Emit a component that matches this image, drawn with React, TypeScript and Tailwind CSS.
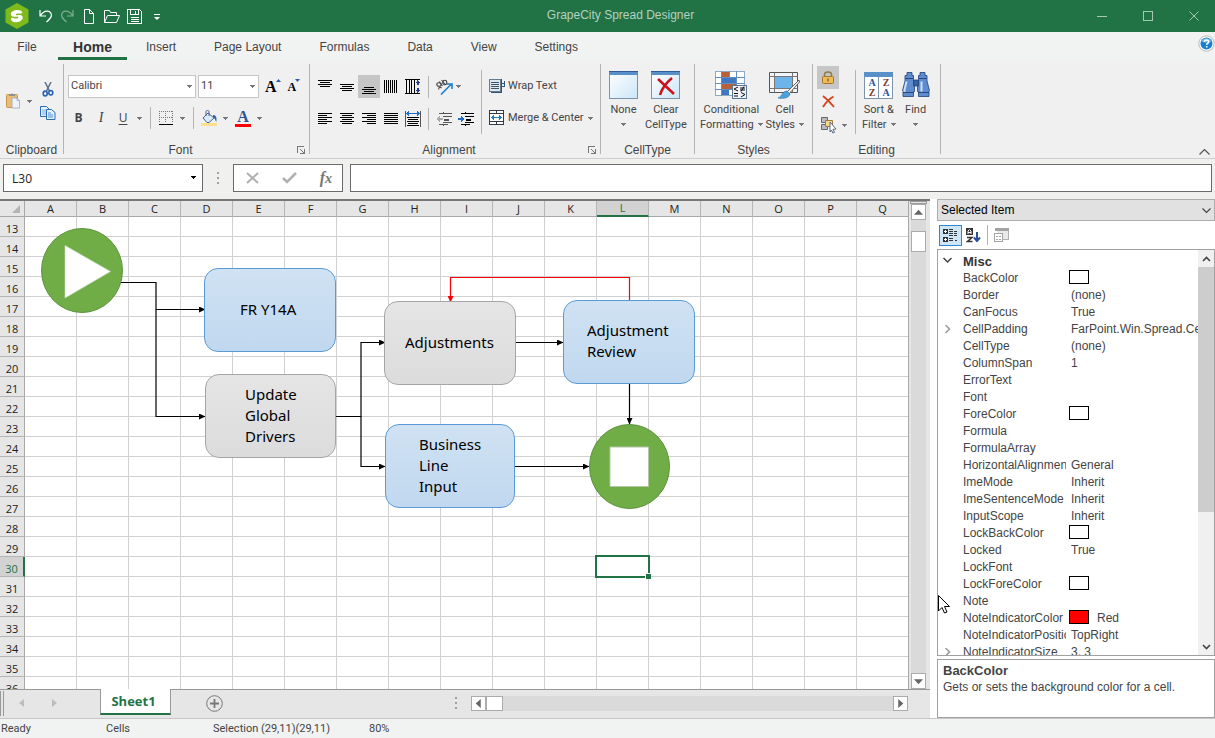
import type { ReactNode } from "react";
import clsx from "clsx";

const columns = "ABCDEFGHIJKLMNOPQ".split("");
const rows = Array.from({ length: 24 }, (_, i) => i + 13);
const activeColumn = "L";
const activeRow = 30;

const tabs = ["Insert", "Page Layout", "Formulas", "Data", "View", "Settings"];

type Property = { name: string; value?: string; swatch?: "white" | "red"; expandable?: boolean };

const properties: Property[] = [
  { name: "BackColor", swatch: "white" },
  { name: "Border", value: "(none)" },
  { name: "CanFocus", value: "True" },
  { name: "CellPadding", value: "FarPoint.Win.Spread.CellPadding", expandable: true },
  { name: "CellType", value: "(none)" },
  { name: "ColumnSpan", value: "1" },
  { name: "ErrorText" },
  { name: "Font" },
  { name: "ForeColor", swatch: "white" },
  { name: "Formula" },
  { name: "FormulaArray" },
  { name: "HorizontalAlignment", value: "General" },
  { name: "ImeMode", value: "Inherit" },
  { name: "ImeSentenceMode", value: "Inherit" },
  { name: "InputScope", value: "Inherit" },
  { name: "LockBackColor", swatch: "white" },
  { name: "Locked", value: "True" },
  { name: "LockFont" },
  { name: "LockForeColor", swatch: "white" },
  { name: "Note" },
  { name: "NoteIndicatorColor", value: "Red", swatch: "red" },
  { name: "NoteIndicatorPosition", value: "TopRight" },
  { name: "NoteIndicatorSize", value: "3, 3", expandable: true },
];

function Caret({ className = "text-[#777]" }: { className?: string }) {
  return (
    <svg width="5" height="3" viewBox="0 0 5 3" className={clsx("shrink-0", className)} shapeRendering="crispEdges">
      <path d="M0 0h5v1H4v1H3v1H2V2H1V1H0z" fill="currentColor" />
    </svg>
  );
}

function Divider({ className }: { className: string }) {
  return <div className={clsx("w-px shrink-0 bg-[#b4b4b4]", className)} />;
}

// Rows of horizontal rules, used by all the alignment buttons
function Lines({ rules }: { rules: [number, number, number][] }) {
  return (
    <svg width="16" height="16" viewBox="0 0 16 16" shapeRendering="crispEdges">
      {rules.map(([x, y, w]) => (
        <rect key={`${x}-${y}`} x={x} y={y} width={w} height="1" fill="#000" />
      ))}
    </svg>
  );
}

function IconButton({ label, active, className, children }: { label: string; active?: boolean; className?: string; children: ReactNode }) {
  return (
    <button
      type="button"
      aria-label={label}
      className={clsx("flex shrink-0 items-center justify-center", active && "bg-[#c6c6c6]", className ?? "h-[23px] w-[22px]")}
    >
      {children}
    </button>
  );
}

function Launcher() {
  return (
    <button type="button" aria-label="More options" className="absolute right-1 bottom-1">
      <svg width="8" height="8" viewBox="0 0 8 8" shapeRendering="crispEdges" fill="#777">
        <path d="M0 0h7v1H1v6H0zM3 3h1v1h1v1h1v1h1V3h1v5H3V7h3V6H5V5H4V4H3z" />
      </svg>
    </button>
  );
}

function Group({ title, width, launcher, children }: { title: string; width: string; launcher?: boolean; children: ReactNode }) {
  return (
    <>
      <section aria-label={title} className={clsx("relative flex shrink-0 flex-col", width)}>
        <div className="h-[78px]">{children}</div>
        <h2 className={clsx("text-center font-['Liberation_Sans',Arial,sans-serif] text-xs leading-4 text-[#444]", launcher && "pr-3")}>{title}</h2>
        {launcher && <Launcher />}
      </section>
      <Divider className="h-[90px]" />
    </>
  );
}

function BigButton({ icon, first, second, caret }: { icon: ReactNode; first: string; second?: string; caret?: boolean }) {
  return (
    <button type="button" className="flex flex-col items-center leading-[15px]">
      <span className="flex h-[30px] items-center">{icon}</span>
      <span className="mt-[2px]">{first}</span>
      <span className="flex h-[15px] items-center gap-1">
        {second}
        {caret && <Caret />}
      </span>
    </button>
  );
}

function Logo() {
  return (
    <svg width="24" height="26" viewBox="0 0 24 26">
      <path d="M12 0 23.5 6.5v13L12 26 .5 19.500V6.500z" fill="#7fba1b" />
      <path
        d="M17.500 9.500C16.500 7 13 6.500 10 7.200 6.500 8 5 10.500 6.300 12.500c1 1.500 3 1.500 4.800 1.200 1.500-.2 2.300.1 2.300.7 0 .8-1.500 1.200-3.200 1-1.700-.2-2.600-.8-3.800-.7-1.300 2.500 1.600 4.800 5 4.500 3.800-.3 6.700-2.600 6.300-5-.4-2-2.700-2.300-5-2-1.300.2-2-.1-1.900-.7.2-.8 1.600-1.100 3-.9 1.400.200 2.500-.1 3.700-1.100z"
        fill="#fff"
      />
    </svg>
  );
}

function TitleBar() {
  return (
    <header className="flex h-8 shrink-0 items-center bg-[#217346] pl-[5px] text-white">
      <Logo />
      <div className="flex items-center gap-[7px] pl-[9px]">
        <button type="button" aria-label="Undo">
          <svg width="15" height="14" viewBox="0 0 15 14" fill="none" stroke="#fff" strokeWidth="1.200">
            <path d="M2 1v6h6M2.500 6.500C4.500 3.500 7 2 9.500 2.200c3 .3 4.300 2.500 3.800 4.800-.3 1.500-2 3.500-4.800 6" />
          </svg>
        </button>
        <button type="button" aria-label="Redo">
          <svg width="15" height="14" viewBox="0 0 15 14" fill="none" stroke="#7fae93" strokeWidth="1.200">
            <path d="M13 1v6H7M12.500 6.500C10.500 3.500 8 2 5.500 2.200 2.500 2.500 1.200 4.700 1.700 7c.3 1.500 2 3.500 4.800 6" />
          </svg>
        </button>
        <button type="button" aria-label="New" className="px-[2px]">
          <svg width="11" height="15" viewBox="0 0 11 15" fill="none" stroke="#fff">
            <path d="M.500.5h5l4 4v10h-9zM5.500.5v4h4" />
          </svg>
        </button>
        <button type="button" aria-label="Open">
          <svg width="16" height="13" viewBox="0 0 16 13" fill="none" stroke="#fff">
            <path d="M.5 12.500V.5h5l1 2h6v3M.5 12.500l3-7h12l-3 7z" />
          </svg>
        </button>
        <button type="button" aria-label="Save">
          <svg width="15" height="15" viewBox="0 0 15 15" fill="none" stroke="#fff" shapeRendering="crispEdges">
            <path d="M.5.5h12l2 2v12H.5zM3.500.5v5h8v-5M8.500 1.500v3M3.500 8.500h8M3.500 10.500h8M3.500 12.500h8" />
          </svg>
        </button>
        <button type="button" aria-label="Customize toolbar" className="ml-[5px]">
          <svg width="6" height="7" viewBox="0 0 6 7" fill="#fff">
            <path d="M0 1h6v1H0zM0 4h6L3 7z" />
          </svg>
        </button>
      </div>
      <h1 className="flex-1 pr-4 pb-[2px] text-center text-xs text-[#b4d0c0]">GrapeCity Spread Designer</h1>
      <div className="flex items-center gap-9 pr-4">
        <button type="button" aria-label="Minimize" className="flex size-[10px] items-center">
          <span className="h-px w-full bg-[#a6c7b5]" />
        </button>
        <button type="button" aria-label="Maximize" className="size-[10px] border border-[#a6c7b5]" />
        <button type="button" aria-label="Close">
          <svg width="10" height="10" viewBox="0 0 10 10" stroke="#a6c7b5">
            <path d="M.5.5l9 9M9.500.5l-9 9" />
          </svg>
        </button>
      </div>
    </header>
  );
}

function TabStrip() {
  return (
    <nav aria-label="Ribbon tabs" className="flex h-7 shrink-0 bg-[#f1f3f2] text-xs text-[#444]">
      <button type="button" className="w-[58px] pt-px pr-1">File</button>
      <button type="button" className="w-[69px] border-b-3 border-[#217346] pt-1 text-sm leading-5 font-bold text-[#333]">Home</button>
      {tabs.map((tab) => (
        <button key={tab} type="button" className="px-[19px] pt-px">
          {tab}
        </button>
      ))}
      <button type="button" aria-label="Help" className="ml-auto self-start pt-[3px]">
        <svg width="17" height="17" viewBox="0 0 17 17">
          <circle cx="8.500" cy="8.500" r="7.700" fill="#fff" stroke="#b5b5b5" />
          <circle cx="8.500" cy="8.500" r="6" fill="#1b7fd0" />
          <path d="M3.500 6.500a5.500 5.500 0 0 1 10 0c-3 1.500-7 1.500-10 0z" fill="#6db5ec" />
          <path d="M6.200 6.800C6.500 4.500 11 4.500 10.700 7c-.2 1.300-2 1.300-2 2.800M8.700 11v1.500" fill="none" stroke="#fff" strokeWidth="1.600" />
        </svg>
      </button>
    </nav>
  );
}

function ClipboardGroup() {
  return (
    <Group title="Clipboard" width="w-[63px]">
      <div className="flex h-[74px] items-center">
        <button type="button" aria-label="Paste" className="ml-[6px] flex items-center gap-[7px]">
          <svg width="14" height="16" viewBox="0 0 14 16">
            <rect x=".5" y="1.500" width="11" height="13" rx="1" fill="#e9bd78" stroke="#c79549" />
            <path d="M3 3V1.500h1.500L6 .3l1.500 1.200H9V3z" fill="#8a8f98" />
            <path d="M6 5h5l2.500 2.500V15H6z" fill="#eef3fb" stroke="#9aa7bd" strokeWidth=".8" />
            <path d="M11 5v2.500h2.500" fill="none" stroke="#9aa7bd" strokeWidth=".8" />
          </svg>
          <Caret />
        </button>
        <div className="ml-2 flex flex-col gap-[9px]">
          <button type="button" aria-label="Cut" className="flex justify-center">
            <svg width="12" height="15" viewBox="0 0 12 15" fill="none">
              <path d="M3 0l4.500 9M9 0L4.500 9" stroke="#5b6f8c" strokeWidth="1.500" />
              <ellipse cx="3.200" cy="11.500" rx="2" ry="2.400" stroke="#2a62b4" strokeWidth="1.600" />
              <ellipse cx="8.800" cy="10.800" rx="2" ry="2.200" stroke="#2a62b4" strokeWidth="1.600" />
            </svg>
          </button>
          <button type="button" aria-label="Copy">
            <svg width="16" height="14" viewBox="0 0 16 14" stroke="#2b6cb5">
              <path d="M.5.500h6l3 3v7h-9z" fill="#e4f0fc" />
              <path d="M2 4h4M2 6h4M2 8h4" stroke="#7fb0e0" />
              <path d="M6.500 3.500h5l3.500 3v7H6.500z" fill="#e4f0fc" />
              <path d="M8 7h3M8 9h5M8 11h5" stroke="#4a8fd6" />
            </svg>
          </button>
        </div>
      </div>
    </Group>
  );
}

function FontGroup() {
  return (
    <Group title="Font" width="w-[245px]" launcher>
      <div className="flex items-center pt-[11px] pl-1">
        <div className="relative mr-[2px] w-[128px]">
          <select aria-label="Font name" className="h-[23px] w-full appearance-none border border-[#c6c6c6] bg-white pl-[2px] outline-none">
            <option>Calibri</option>
          </select>
          <Caret className="pointer-events-none absolute top-[10px] right-1 text-[#777]" />
        </div>
        <div className="relative w-[61px]">
          <select aria-label="Font size" className="h-[23px] w-full appearance-none border border-[#c6c6c6] bg-white pl-[2px] outline-none">
            <option>11</option>
          </select>
          <Caret className="pointer-events-none absolute top-[10px] right-1 text-[#777]" />
        </div>
        <button type="button" aria-label="Grow font" className="ml-[6px] flex font-['Liberation_Serif',serif] text-base leading-5 font-bold text-black">
          A
          <svg width="5" height="3" viewBox="0 0 5 3" className="mt-[2px] -ml-px">
            <path d="M0 3h5L2.500 0z" fill="#2a5caa" />
          </svg>
        </button>
        <button type="button" aria-label="Shrink font" className="ml-[7px] flex font-['Liberation_Serif',serif] text-xs leading-5 font-bold text-black">
          A
          <svg width="5" height="3" viewBox="0 0 5 3" className="mt-[2px] -ml-px">
            <path d="M0 0h5L2.500 3z" fill="#2a5caa" />
          </svg>
        </button>
      </div>
      <div className="flex items-center pt-[9px] pl-1 text-[#444]">
        <button type="button" aria-label="Bold" className="w-[21px] font-['Open_Sans',sans-serif] text-xs font-bold">B</button>
        <button type="button" aria-label="Italic" className="w-6 font-['Liberation_Serif',serif] text-sm italic">I</button>
        <button type="button" aria-label="Underline" className="w-5 font-['Open_Sans',sans-serif] text-xs underline underline-offset-2">U</button>
        <Caret className="ml-1 text-[#777]" />
        <Divider className="ml-[8px] h-[22px]" />
        <button type="button" aria-label="Borders" className="ml-[8px] flex items-center gap-[7px]">
          <svg width="14" height="14" viewBox="0 0 14 14" shapeRendering="crispEdges" stroke="#777">
            <path d="M0 .5h14M0 6.500h14M.5 0v12M6.500 0v12M13.500 0v12" strokeDasharray="1 1" />
            <path d="M0 13.500h14" stroke="#000" />
          </svg>
          <Caret />
        </button>
        <Divider className="ml-[8px] h-[22px]" />
        <button type="button" aria-label="Fill color" className="ml-[7px] flex items-center gap-[6px]">
          <svg width="16" height="16" viewBox="0 0 16 16">
            <path d="M2 8l5-5 6 5-5 4.500H6z" fill="#dbe9f7" stroke="#4a668c" />
            <path d="M5 6V1.500c0-1.500 3-1.500 3 0V6" fill="none" stroke="#4a668c" />
            <path d="M12 5c3 0 4 2.500 3.300 7-1-1.500-1.500-4-3.300-5z" fill="#2a62b4" />
            <path d="M0 13h16v3H0z" fill="#fbe18d" />
          </svg>
          <Caret />
        </button>
        <button type="button" aria-label="Font color" className="ml-[7px] flex items-center gap-[6px]">
          <span className="flex w-4 flex-col items-center border-b-3 border-[#f00] font-['Liberation_Serif',serif] text-base leading-[14px] font-bold text-[#2f5496]">A</span>
          <Caret />
        </button>
      </div>
    </Group>
  );
}

function AlignmentGroup() {
  return (
    <Group title="Alignment" width="w-[290px]" launcher>
      <div className="flex">
        <div className="pt-[11px] pl-1">
          <div className="flex items-center">
            <IconButton label="Top align">
              <Lines rules={[[1, 1, 14], [3, 3, 10], [1, 5, 14], [3, 7, 10]]} />
            </IconButton>
            <IconButton label="Middle align">
              <Lines rules={[[1, 5, 14], [3, 7, 10], [1, 9, 14], [3, 11, 10]]} />
            </IconButton>
            <IconButton label="Bottom align" active>
              <Lines rules={[[3, 8, 10], [1, 10, 14], [3, 12, 10], [1, 14, 14]]} />
            </IconButton>
            <IconButton label="Vertical justify">
              <svg width="16" height="16" viewBox="0 0 16 16" shapeRendering="crispEdges">
                <path d="M1.500 1v13M3.500 1v13M5.500 1v13M7.500 1v13M9.500 1v13M11.500 1v13M13.500 1v13" stroke="#000" />
              </svg>
            </IconButton>
            <IconButton label="Vertical distributed">
              <svg width="16" height="16" viewBox="0 0 16 16" shapeRendering="crispEdges">
                <path d="M0 .5h15M0 14.500h15M1.500 1v13M4.500 1v13M6.500 1v13M9.500 1v13" stroke="#000" />
                <path d="M12 1h1v1h1v1h1v1h-1v2h-2V4h-1V3h1zM12 14h1v-1h1v-1h1v-1h-1V9h-2v2h-1v1h1z" fill="#20408f" />
              </svg>
            </IconButton>
            <Divider className="ml-1 h-[22px]" />
            <button type="button" aria-label="Orientation" className="ml-[7px] flex items-center gap-[3px]">
              <svg width="17" height="16" viewBox="0 0 17 16" fill="none">
                <ellipse cx="3" cy="5.500" rx="2.200" ry="1.800" stroke="#444" strokeWidth="1.100" />
                <path d="M3 2.500l3.500 4.500M5.500 1l4 5" stroke="#444" strokeWidth="1.100" />
                <ellipse cx="8.800" cy="3.500" rx="2" ry="2.200" stroke="#444" strokeWidth="1.100" />
                <path d="M3 10.500C2 8.500 4 7.500 5.500 9" stroke="#444" strokeWidth="1.100" />
                <path d="M5 15.500L15 5.500M10.500 5H16v5" stroke="#1e7fc8" strokeWidth="1.600" />
              </svg>
              <Caret />
            </button>
          </div>
          <div className="flex items-center pt-[9px]">
            <IconButton label="Align left">
              <Lines rules={[[1, 2, 14], [1, 4, 9], [1, 6, 14], [1, 8, 9], [1, 10, 14], [1, 12, 9]]} />
            </IconButton>
            <IconButton label="Center">
              <Lines rules={[[1, 2, 14], [3, 4, 10], [1, 6, 14], [3, 8, 10], [1, 10, 14], [3, 12, 10]]} />
            </IconButton>
            <IconButton label="Align right">
              <Lines rules={[[1, 2, 14], [6, 4, 9], [1, 6, 14], [6, 8, 9], [1, 10, 14], [6, 12, 9]]} />
            </IconButton>
            <IconButton label="Justify">
              <Lines rules={[[1, 2, 14], [1, 4, 14], [1, 6, 14], [1, 8, 14], [1, 10, 14], [1, 12, 14]]} />
            </IconButton>
            <IconButton label="Distributed">
              <svg width="16" height="16" viewBox="0 0 16 16" shapeRendering="crispEdges">
                <path d="M.5 0v16M15.500 0v16" stroke="#555" />
                <path d="M1 2h1V1h1V0h1v2h8V0h1v1h1v1h1v1h-1v1h-1v1h-1V3H4v2H3V4H2V3H1z" fill="#1e6fc8" />
                <path d="M2 6.500h12M3 8.500h10M2 10.500h12M3 12.500h10M2 14.500h12" stroke="#000" />
              </svg>
            </IconButton>
            <Divider className="ml-1 h-[22px]" />
            <IconButton label="Decrease indent" className="ml-[7px]">
              <svg width="17" height="16" viewBox="0 0 17 16" shapeRendering="crispEdges" fill="#555">
                <path d="M3 2h4v1H3zM8 2h8v1H8zM8 5h8v1H8zM8 8h5v2H8zM8 11h8v1H8zM3 13h4v1H3zM8 13h4v1H8z" />
                <path d="M7 1h1v2H7zM7 5h1v1H7zM7 11h1v1H7zM7 13h1v2H7z" />
                <path d="M0 8l4-3v2h3v2H4v2z" fill="#aaa" />
              </svg>
            </IconButton>
            <IconButton label="Increase indent" className="ml-[5px]">
              <svg width="17" height="16" viewBox="0 0 17 16" shapeRendering="crispEdges" fill="#000">
                <path d="M3 2h4v1H3zM8 2h8v1H8zM8 5h8v1H8zM8 8h5v2H8zM8 11h8v1H8zM3 13h4v1H3zM8 13h4v1H8z" />
                <path d="M7 1h1v2H7zM7 5h1v1H7zM7 11h1v1H7zM7 13h1v2H7z" />
                <path d="M7 8L3 5v2H0v2h3v2z" fill="#1e6fc8" />
              </svg>
            </IconButton>
          </div>
        </div>
        <Divider className="mt-[6px] ml-auto h-[64px]" />
        <div className="flex w-[118px] flex-col gap-4 pt-[14px] pl-[7px]">
          <button type="button" className="flex h-4 items-center gap-[3px] whitespace-nowrap">
            <svg width="16" height="16" viewBox="0 0 16 16" shapeRendering="crispEdges">
              <path d="M.5 1.500h11v12H.5z" fill="#dfe7ee" stroke="#687b8c" />
              <path d="M2 4.500h8M2 6.500h8M2 8.500h8M2 10.500h8" stroke="#40566b" />
              <path d="M12 5h3V3M12.500 1v13M15.500 3v5h-3M12.500 14.500h-11" stroke="#2f5080" fill="none" />
            </svg>
            Wrap Text
          </button>
          <button type="button" className="flex h-4 items-center gap-[3px] whitespace-nowrap">
            <svg width="16" height="16" viewBox="0 0 16 16" shapeRendering="crispEdges">
              <path d="M.5.500h14v14H.5zM.5 3.500h14M.5 11.500h14M7.500.500v3M7.500 11.500v3" fill="#fff" stroke="#333a48" />
              <path d="M1 4h13v7H1z" fill="#fff" />
              <path d="M2 7h1V6h1V5h1v2h5V5h1v1h1v1h1v1h-1v1h-1v1h-1V8H5v2H4V9H3V8H2z" fill="#1e7fc8" />
            </svg>
            <span>Merge &amp; Center</span>
            <Caret className="ml-px text-[#777]" />
          </button>
        </div>
      </div>
    </Group>
  );
}

function CellWindow({ crossed }: { crossed?: boolean }) {
  return (
    <svg width="29" height="29" viewBox="0 0 29 29">
      <defs>
        <linearGradient id="windowBody" x1="0" y1="0" x2="1" y2="1">
          <stop offset="0" stopColor="#fff" />
          <stop offset="1" stopColor="#cbe6f8" />
        </linearGradient>
      </defs>
      <rect x=".5" y=".5" width="28" height="27" fill="url(#windowBody)" stroke="#7d94a8" />
      <path d="M0 0h29v4H0z" fill="#5a90c8" />
      <path d="M0 0h29v1H0z" fill="#2f5c98" />
      {crossed && <path d="M7 8l16 15M21 7C15 12 11 17 9 24" stroke="#c9141b" strokeWidth="2.600" fill="none" />}
    </svg>
  );
}

function StylesGroup() {
  return (
    <Group title="Styles" width="w-[117px]">
      <div className="flex justify-between pt-[6px] pr-2 pl-[5px]">
        <BigButton
          first="Conditional"
          second="Formatting"
          caret
          icon={
            <svg width="33" height="30" viewBox="0 0 33 30" shapeRendering="crispEdges">
              <path d="M.5 1.500h29v24H.5z" fill="#fff" stroke="#8faac5" />
              <path d="M7 2h7v5H7z" fill="#b5613a" />
              <path d="M7 8h14v5H7z" fill="#3f78c0" />
              <path d="M7 14h14v5H7z" fill="#b5613a" />
              <path d="M7 20h7v5H7z" fill="#3f78c0" />
              <path d="M0 7.500h30M0 13.500h30M0 19.500h30M6.500 1v25M14.500 1v6M21.500 1v25" stroke="#5f8fc4" />
              <path d="M17.500 15.500h14v13h-14z" fill="#eef3f8" stroke="#5a7690" />
              <path d="M23 17l-4 2 4 2M19 23.500h4M25 18h5M25 20h5M29 16.500l-3 5M26 22.500l4 2-4 2.500M19 26h4" fill="none" stroke="#111" shapeRendering="auto" />
            </svg>
          }
        />
        <BigButton
          first="Cell"
          second="Styles"
          caret
          icon={
            <svg width="31" height="30" viewBox="0 0 31 30">
              <path d="M.5 2.500h28v20H.5z" fill="#f2f4f6" stroke="#555" />
              <path d="M.5 6.500h28M.5 18.500h28M5.500 2.500v20M23.500 2.500v20" stroke="#777" />
              <path d="M6 7h17v11H6z" fill="#6cb4ea" />
              <path d="M30 10L18 22l2 2 10.500-12z" fill="#f3f3f3" stroke="#555" strokeWidth=".9" />
              <path d="M18 21l3 3c-1 4-6 5-12 4 4-1 4-7 9-7z" fill="#4aa3dd" stroke="#2b6fa8" strokeWidth=".6" />
            </svg>
          }
        />
      </div>
    </Group>
  );
}

function EditingGroup() {
  return (
    <Group title="Editing" width="w-[127px]">
      <div className="flex pt-[2px] pl-1">
        <div className="flex w-8 flex-col">
          <IconButton label="Lock" active>
            <svg width="12" height="13" viewBox="0 0 12 13">
              <path d="M2.500 6V3.500C2.500 0 9.500 0 9.500 3.500V6" fill="none" stroke="#8f7a4a" strokeWidth="1.500" />
              <rect x=".5" y="5.500" width="11" height="7" rx="1" fill="#f0bc58" stroke="#a8732a" />
              <path d="M5.500 7.500h1v3h-1z" fill="#5a3a10" />
            </svg>
          </IconButton>
          <IconButton label="Clear" className="mt-[5px] h-[15px] w-[22px]">
            <svg width="13" height="13" viewBox="0 0 13 13" fill="none" stroke="#d8421c" strokeWidth="1.800">
              <path d="M1 1c4 3 7 6 11 11M11.500 1.500C7 4 4 7 1 12" />
            </svg>
          </IconButton>
          <button type="button" aria-label="Select" className="mt-2 ml-1 flex items-center gap-[5px]">
            <svg width="16" height="17" viewBox="0 0 16 17">
              <path d="M.5.500h6v5h-6zM.5 7.500h6v5h-6z" fill="#b9bcc0" stroke="#666" />
              <path d="M4.500 3.500h7v6h-7z" fill="#f5d890" stroke="#9a7b3a" />
              <path d="M9 5l6 7-3 .3 1.500 3-1.700.7-1.300-3L9 15z" fill="#fff" stroke="#4b5f78" strokeWidth=".9" />
            </svg>
            <Caret />
          </button>
        </div>
        <Divider className="ml-[6px] h-[64px] translate-y-1" />
        <div className="flex gap-[6px] pt-1 pl-[6px]">
          <BigButton
            first="Sort &"
            second="Filter"
            caret
            icon={
              <svg width="29" height="27" viewBox="0 0 29 27">
                <rect x=".5" y=".5" width="28" height="26" fill="#fff" stroke="#7d94a8" />
                <path d="M0 0h29v5H0z" fill="#5a90c8" />
                <path d="M14.500 5v22" stroke="#7d94a8" />
                <g fontFamily="Liberation Serif" fontSize="10" fontWeight="700" textAnchor="middle">
                  <text x="8" y="14" fill="#27569c">A</text>
                  <text x="8" y="24" fill="#7a3b33">Z</text>
                  <text x="22" y="14" fill="#7a3b33">Z</text>
                  <text x="22" y="24" fill="#27569c">A</text>
                </g>
              </svg>
            }
          />
          <BigButton
            first="Find"
            caret
            icon={
              <svg width="28" height="26" viewBox="0 0 28 26" stroke="#1f437c" strokeWidth=".8">
                <path d="M5 .5h5v3h1.500v4l1 3v9h-1v5H1v-5l-.5-1L3 9V3.500h2z" fill="#5f8cce" />
                <path d="M18 .5h5v3h2V9l2.500 9.500-.5 1v5H16.500v-5h-1v-9l1-3v-4H18z" fill="#5f8cce" />
                <path d="M11.500 8h5v6h-5z" fill="#34629f" />
                <path d="M4.500 9.500L2.500 18v2M19.500 9.500v10" stroke="#cfe0f6" strokeWidth="2" fill="none" />
                <path d="M1 20.500h10.500M16.500 20.500H27M3.500 6.500h7.500M17 6.500h7.500" stroke="#1b3566" />
              </svg>
            }
          />
        </div>
      </div>
    </Group>
  );
}

function Ribbon() {
  return (
    <div className="relative flex h-[99px] shrink-0 border-b border-[#cfcfcf] bg-[#f0f0f0] pt-1 font-[Roboto,sans-serif] text-[11px] text-[#444]">
      <ClipboardGroup />
      <FontGroup />
      <AlignmentGroup />
      <Group title="CellType" width="w-[93px]">
        <div className="flex gap-[7px] pt-[6px] pl-2">
          <BigButton first="None" caret icon={<CellWindow />} />
          <BigButton first="Clear" second="CellType" icon={<CellWindow crossed />} />
        </div>
      </Group>
      <StylesGroup />
      <EditingGroup />
      <button type="button" aria-label="Collapse ribbon" className="ml-auto self-end pr-[5px] pb-[3px]">
        <svg width="11" height="6" viewBox="0 0 11 6" fill="none" stroke="#555" strokeWidth="1.200">
          <path d="M.5 5.500l5-5 5 5" />
        </svg>
      </button>
    </div>
  );
}

function Dots() {
  return (
    <svg width="2" height="12" viewBox="0 0 2 12" fill="#a0a0a0" shapeRendering="crispEdges">
      <path d="M0 0h2v2H0zM0 5h2v2H0zM0 10h2v2H0z" />
    </svg>
  );
}

function FormulaBar() {
  return (
    <div className="flex h-10 shrink-0 items-start bg-[#f0f0ee] px-[3px] pt-[5px]">
      <div className="relative w-[200px]">
        <input aria-label="Name box" defaultValue="L30" className="h-7 w-full border border-[#6a6a6a] bg-white pl-2 font-['Open_Sans',sans-serif] text-xs text-[#222] outline-none" />
        <Caret className="absolute top-[12px] right-[7px] text-black" />
      </div>
      <div className="flex h-7 w-[30px] items-center justify-center">
        <Dots />
      </div>
      <div className="flex h-7 w-[110px] items-center justify-between border border-[#6a6a6a] bg-white pr-[10px] pl-3">
        <button type="button" aria-label="Cancel">
          <svg width="13" height="12" viewBox="0 0 13 12" stroke="#b0b0b0" strokeWidth="2">
            <path d="M1 1l11 10M12 1L1 11" />
          </svg>
        </button>
        <button type="button" aria-label="Enter">
          <svg width="15" height="12" viewBox="0 0 15 12" fill="none" stroke="#b0b0b0" strokeWidth="2.500">
            <path d="M1 6l4 4 9-9" />
          </svg>
        </button>
        <button type="button" aria-label="Insert function" className="font-['Liberation_Serif',serif] text-base leading-5 font-bold text-[#777] italic">
          f<span className="text-sm">x</span>
        </button>
      </div>
      <input aria-label="Formula" className="ml-[7px] h-7 flex-1 border border-[#6a6a6a] bg-white px-2 text-xs outline-none" />
    </div>
  );
}

function Node({ className, tone, children }: { className: string; tone: "blue" | "gray"; children: ReactNode }) {
  return (
    <div
      className={clsx(
        "absolute flex h-[84px] flex-col justify-center rounded-[14px] border bg-linear-to-b pb-[2px] font-['Noto_Sans',sans-serif] text-[15px] leading-[21px] text-black",
        tone === "blue" ? "border-[#5b9bd5] from-[#d0e2f3] to-[#c0d8ef]" : "border-[#a5a5a5] from-[#e5e5e5] to-[#dcdcdc]",
        className,
      )}
    >
      {children}
    </div>
  );
}

function Diagram() {
  return (
    <>
      <svg width="720" height="330" viewBox="0 201 720 330" className="absolute top-0 left-0" fill="none">
        <defs>
          <marker id="arrow" markerWidth="7" markerHeight="6" refX="6" refY="3" orient="auto" markerUnits="userSpaceOnUse">
            <path d="M0 0l6.500 3L0 6z" fill="#000" />
          </marker>
          <marker id="arrowRed" markerWidth="7" markerHeight="6" refX="6" refY="3" orient="auto" markerUnits="userSpaceOnUse">
            <path d="M0 0l6.500 3L0 6z" fill="#f00" />
          </marker>
        </defs>
        <ellipse cx="82" cy="270.500" rx="40.500" ry="42" fill="#70ad47" stroke="#5c9139" />
        <path d="M65 245.500l45.500 26L65 298z" fill="#fff" stroke="#c8d8bd" strokeWidth=".7" />
        <ellipse cx="629.500" cy="466.500" rx="40" ry="42" fill="#70ad47" stroke="#5c9139" />
        <path d="M610 447h38.500v39.500H610z" fill="#fff" stroke="#b5c5a8" />
        <g stroke="#000" strokeWidth="1.200">
          <path d="M121 282.500h35v27H205" markerEnd="url(#arrow)" />
          <path d="M156 309.500v107H205" markerEnd="url(#arrow)" />
          <path d="M336 416.500h25v-74H385" markerEnd="url(#arrow)" />
          <path d="M361 416.500v50H385" markerEnd="url(#arrow)" />
          <path d="M516 342.500h47" markerEnd="url(#arrow)" />
          <path d="M515 466.500h74" markerEnd="url(#arrow)" />
          <path d="M629.500 384v40" markerEnd="url(#arrow)" />
        </g>
        <path d="M629.500 301v-23.500h-179V302" stroke="#f00" strokeWidth="1.200" markerEnd="url(#arrowRed)" />
      </svg>
      <Node tone="blue" className="top-[67px] left-[204px] w-[132px] pl-[35px]">FR Y14A</Node>
      <Node tone="gray" className="top-[173px] left-[205px] w-[131px] pl-[39px]">
        <span>Update</span>
        <span>Global</span>
        <span>Drivers</span>
      </Node>
      <Node tone="gray" className="top-[100px] left-[384px] w-[132px] pl-5">Adjustments</Node>
      <Node tone="blue" className="top-[99px] left-[563px] w-[132px] pl-[23px]">
        <span>Adjustment</span>
        <span>Review</span>
      </Node>
      <Node tone="blue" className="top-[223px] left-[385px] w-[130px] pl-[33px]">
        <span>Business</span>
        <span>Line</span>
        <span>Input</span>
      </Node>
    </>
  );
}

function Grid() {
  return (
    <div className="relative flex-1 overflow-hidden border-r border-[#a8a8a8] bg-white font-['Open_Sans',sans-serif] text-[11px] text-[#222]">
      <table className="w-[909px] table-fixed border-separate border-spacing-0">
        <colgroup>
          <col className="w-[25px]" />
          {columns.map((c) => (
            <col key={c} className="w-[52px]" />
          ))}
        </colgroup>
        <thead>
          <tr className="h-4">
            <th aria-label="Select all" className="border-r border-b border-[#a8a8a8] bg-[#e6e6e6] p-0">
              <svg width="8" height="8" viewBox="0 0 8 8" className="ml-3">
                <path d="M8 0v8H0z" fill="#b4b4b4" />
              </svg>
            </th>
            {columns.map((c) => (
              <th
                key={c}
                scope="col"
                className={clsx(
                  "border-r p-0 text-center font-normal",
                  c === activeColumn
                    ? "border-b-2 border-r-[#b5b5b5] border-b-[#217346] bg-[#d2d2d2] leading-[14px] text-[#217346]"
                    : "border-b border-r-[#b5b5b5] border-b-[#a8a8a8] bg-[#e6e6e6] leading-[15px]",
                )}
              >
                {c}
              </th>
            ))}
          </tr>
        </thead>
        <tbody>
          {rows.map((r) => (
            <tr key={r} className="h-5">
              <th
                scope="row"
                className={clsx(
                  "border-b border-b-[#b5b5b5] p-0 pt-1 text-center leading-[15px] font-normal",
                  r === activeRow ? "border-r-2 border-r-[#217346] bg-[#d2d2d2] text-[#217346]" : "border-r border-r-[#a8a8a8] bg-[#e6e6e6]",
                )}
              >
                {r}
              </th>
              {columns.map((c) => (
                <td key={c} className="border-r border-b border-[#d0d0d0] p-0" />
              ))}
            </tr>
          ))}
        </tbody>
      </table>
      <Diagram />
      {/* Active cell outline with its fill handle */}
      <div className="absolute top-[354px] left-[595px] h-[23px] w-[55px] border-2 border-[#217346]">
        <div className="absolute -right-[3px] -bottom-[3px] size-[6px] border-t border-l border-white bg-[#217346]" />
      </div>
    </div>
  );
}

const scrollButton = "flex items-center justify-center border border-[#ababab] bg-white";

function Arrow({ d }: { d: string }) {
  return (
    <svg width="9" height="9" viewBox="0 0 8 8">
      <path d={d} fill="#666" />
    </svg>
  );
}

function VerticalScroll() {
  return (
    <div className="flex w-[21px] shrink-0 flex-col bg-[#e6e6e6] pr-[3px] pl-px">
      <div className="h-[3px] border border-[#999] bg-[#e6e6e6]" />
      <div className="flex flex-1 flex-col px-px">
        <button type="button" aria-label="Scroll up" className={clsx(scrollButton, "h-[16px]")}>
          <Arrow d="M0 6h8L4 1.500z" />
        </button>
        <div className="flex-1 bg-[#dadada] pt-[11px]">
          <div className="h-[21px] border border-[#ababab] bg-white" />
        </div>
        <button type="button" aria-label="Scroll down" className={clsx(scrollButton, "h-[16px]")}>
          <Arrow d="M0 2h8L4 6.500z" />
        </button>
      </div>
    </div>
  );
}

function SheetBar() {
  return (
    <div className="flex h-[29px] shrink-0 bg-[#e6e6e6]">
      <div className="flex flex-1 items-start border-t border-[#999]">
        <div className="my-px h-[25px] w-1 border-r border-l border-[#999]" />
        <div className="flex h-[26px] w-24 items-center gap-6 pl-[14px]">
          <button type="button" aria-label="Previous sheet">
            <svg width="8" height="8" viewBox="0 0 8 8">
              <path d="M6 0v8L1 4z" fill="#bdbdbd" />
            </svg>
          </button>
          <button type="button" aria-label="Next sheet">
            <svg width="8" height="8" viewBox="0 0 8 8">
              <path d="M2 0v8l5-4z" fill="#bdbdbd" />
            </svg>
          </button>
        </div>
        <button
          type="button"
          className="-mt-px h-[26px] w-[71px] border-r border-b-2 border-l border-r-[#999] border-b-[#217346] border-l-[#999] bg-white pt-[2px] pr-1 font-['Open_Sans',sans-serif] text-[13px] font-bold text-[#217346]"
        >
          Sheet1
        </button>
        <button type="button" aria-label="Add sheet" className="ml-[35px] flex h-[27px] items-center">
          <svg width="17" height="17" viewBox="0 0 17 17" fill="none" stroke="#777">
            <circle cx="8.500" cy="8.500" r="7.800" />
            <path d="M8.500 4v9M4 8.500h9" strokeWidth="1.800" />
          </svg>
        </button>
        <div className="ml-auto flex h-[26px] items-center pr-[9px]">
          <Dots />
        </div>
      </div>
      <div className="flex w-[464px] shrink-0 items-center border-t border-[#999] pr-[22px] pb-[2px] pl-[5px]">
        <button type="button" aria-label="Scroll left" className={clsx(scrollButton, "h-[15px] w-[15px]")}>
          <Arrow d="M6 0v8L1.500 4z" />
        </button>
        <div className="h-[15px] flex-1 bg-[#dadada]">
          <div className="h-[15px] w-[17px] border border-[#ababab] bg-white" />
        </div>
        <button type="button" aria-label="Scroll right" className={clsx(scrollButton, "h-[15px] w-[15px]")}>
          <Arrow d="M2 0v8l4.500-4z" />
        </button>
      </div>
    </div>
  );
}

function Expander({ open }: { open?: boolean }) {
  return (
    <svg width="9" height="9" viewBox="0 0 9 9" fill="none" stroke={open ? "#444" : "#999"} strokeWidth="1.500" className="mx-auto">
      <path d={open ? "M.5 1l4 4 4-4" : "M2.500 0l4 4-4 4"} />
    </svg>
  );
}

function PropertyPanel() {
  return (
    <aside className="flex w-[278px] shrink-0 flex-col text-[#444]">
      <div className="relative shrink-0">
        <select aria-label="Selected object" className="block h-[22px] w-full appearance-none border border-[#adadad] bg-[#e1e1e1] pl-[3px] text-xs text-black outline-none">
          <option>Selected Item</option>
        </select>
        <svg width="9" height="6" viewBox="0 0 9 6" fill="none" stroke="#444" strokeWidth="1.200" className="pointer-events-none absolute top-[9px] right-1">
          <path d="M.5.500l4 4 4-4" />
        </svg>
      </div>
      <div className="flex h-7 shrink-0 items-center pl-[2px]">
        <button type="button" aria-label="Categorized" className="flex h-[21px] w-[23px] items-center justify-center border border-[#2b88d8] bg-[#cfe5f8]">
          <svg width="15" height="15" viewBox="0 0 15 15" shapeRendering="crispEdges">
            <path d="M0 1h5v5H0zM0 9h5v5H0z" fill="#333" />
            <path d="M1 3.500h3M2.500 2v3M1 11.500h3M2.500 10v3" stroke="#fff" />
            <path d="M6 1.500h4M6 3.500h4M6 5.500h4M6 7.500h4M6 10.500h4M6 12.500h4M11 3.500h3M11 5.500h3M11 7.500h3M12 12.500h2" stroke="#333" />
          </svg>
        </button>
        <button type="button" aria-label="Alphabetical" className="ml-1">
          <svg width="15" height="15" viewBox="0 0 15 15">
            <path d="M0 0h7v7H0z" fill="#333" />
            <path d="M2 6V3l1.500-1.500L5 3v3M2 4.500h3" stroke="#fff" fill="none" />
            <path d="M1 9.500h5l-4.500 4H6.500" stroke="#333" strokeWidth="1.500" fill="none" />
            <path d="M11 4v9M8 9.500l3 3.500 3-3.500" stroke="#2a4f96" strokeWidth="2" fill="none" />
          </svg>
        </button>
        <Divider className="mx-[6px] h-5" />
        <button type="button" aria-label="Property pages" disabled>
          <svg width="15" height="14" viewBox="0 0 15 14" shapeRendering="crispEdges" fill="none">
            <path d="M2 1.500h12.500V11H9" stroke="#b0b0b0" fill="#e9e9e9" />
            <path d="M1 0h14v3H1z" fill="#a3a3a3" />
            <path d="M.5 5.500h8v8h-8z" fill="#fff" stroke="#a3a3a3" />
            <path d="M2 8.500h2M5 8.500h2M2 11.500h2M5 11.500h2" stroke="#a3a3a3" />
          </svg>
        </button>
      </div>
      <div className="flex min-h-0 flex-1 border border-[#a0a0a0] bg-white">
        <div className="min-w-0 flex-1 overflow-hidden pt-[3px]">
          <table className="w-full table-fixed border-separate border-spacing-0 text-xs leading-[17px]">
            <colgroup>
              <col className="w-[25px]" />
              <col className="w-[103px]" />
              <col />
            </colgroup>
            <tbody>
              <tr className="h-[17px]">
                <td className="p-0 pr-[6px]">
                  <Expander open />
                </td>
                <th colSpan={2} className="p-0 text-left text-[13px] font-bold text-[#333]">Misc</th>
              </tr>
              {properties.map((p) => (
                <tr key={p.name} className="h-[17px]">
                  <td className="p-0 pr-[6px]">{p.expandable && <Expander />}</td>
                  <th scope="row" className="overflow-hidden p-0 text-left font-normal whitespace-nowrap">{p.name}</th>
                  <td className="overflow-hidden p-0 pl-[3px] whitespace-nowrap">
                    <div className="flex h-[17px] items-center">
                      {p.swatch && (
                        <span className={clsx("mb-[3px] h-[14px] w-5 border border-black", p.swatch === "red" ? "mr-2 bg-[#f00]" : "bg-white")} />
                      )}
                      {p.value && <span className={p.swatch ? "" : "pl-[2px]"}>{p.value}</span>}
                    </div>
                  </td>
                </tr>
              ))}
            </tbody>
          </table>
        </div>
        <div className="flex w-[16px] shrink-0 flex-col items-center bg-[#f0f0f0]">
          <button type="button" aria-label="Scroll properties up" className="flex h-[17px] items-center">
            <svg width="9" height="6" viewBox="0 0 9 6" fill="none" stroke="#444" strokeWidth="1.600">
              <path d="M1 5l3.500-3.500L8 5" />
            </svg>
          </button>
          <div className="w-full flex-1">
            <div className="h-[66%] bg-[#cdcdcd]" />
          </div>
          <button type="button" aria-label="Scroll properties down" className="flex h-[17px] items-center">
            <svg width="9" height="6" viewBox="0 0 9 6" fill="none" stroke="#444" strokeWidth="1.600">
              <path d="M1 1l3.500 3.500L8 1" />
            </svg>
          </button>
        </div>
      </div>
      <div className="mt-[3px] h-[59px] shrink-0 border border-[#a0a0a0] bg-white px-[5px] pt-[3px]">
        <h3 className="text-[13px] leading-4 font-bold">BackColor</h3>
        <p className="text-xs leading-4">Gets or sets the background color for a cell.</p>
      </div>
    </aside>
  );
}

export default function App() {
  return (
    <div className="relative flex h-screen flex-col overflow-hidden bg-white font-['Liberation_Sans',Arial,sans-serif]">
      <TitleBar />
      <TabStrip />
      <Ribbon />
      <FormulaBar />
      <main className="flex min-h-0 flex-1 gap-[7px]">
        <div className="flex min-w-0 flex-1 flex-col border-t-2 border-[#777]">
          <div className="flex min-h-0 flex-1">
            <Grid />
            <VerticalScroll />
          </div>
          <SheetBar />
        </div>
        <PropertyPanel />
      </main>
      <footer className="flex h-5 shrink-0 items-center border-t border-[#c6c6c6] bg-[#f1f3f2] pt-[2px] pl-px font-[Roboto,sans-serif] text-[11px] text-[#444]">
        <span className="w-[105px]">Ready</span>
        <span className="w-[107px]">Cells</span>
        <span className="w-[156px]">Selection (29,11)(29,11)</span>
        <span>80%</span>
      </footer>
      {/* Mouse pointer */}
      <svg width="13" height="19" viewBox="0 0 13 19" className="pointer-events-none absolute top-[595px] left-[938px]">
        <path d="M.5.500v15.500l3.500-3.500 2.500 5.500 2.500-1-2.500-5.500h5z" fill="#fff" stroke="#000" />
      </svg>
    </div>
  );
}
